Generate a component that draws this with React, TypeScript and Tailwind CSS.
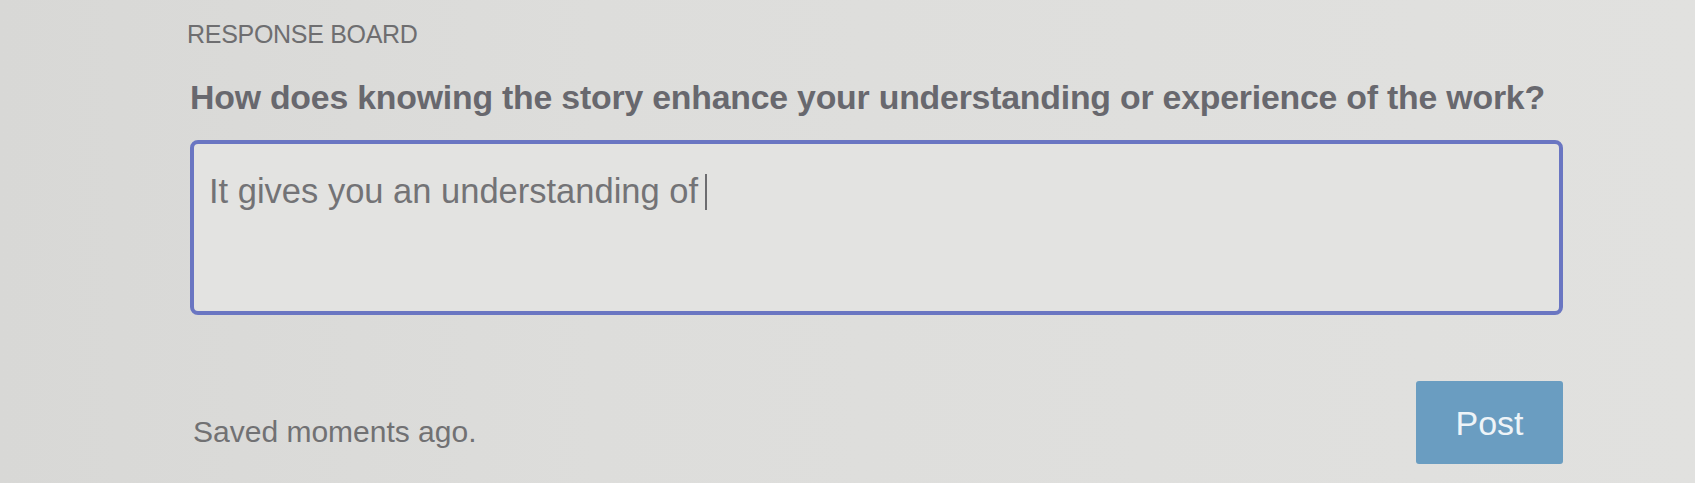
import React from "react";

export default function App() {
  return (
    <div
      className="w-[1695px] h-[483px] overflow-hidden bg-[linear-gradient(90deg,#d8d8d6_0%,#dddddb_35%,#e1e1df_100%)]"
      style={{ fontFamily: '"Liberation Sans", Arial, sans-serif' }}
    >
      <div className="pl-[187px] pt-[20px] w-[1563px]">
        <div className="text-[25px] leading-[28px] text-[#6e6e70] tracking-[-0.3px]">
          RESPONSE BOARD
        </div>
        <div className="mt-[29px] ml-[3px] text-[33.8px] leading-[40px] font-bold text-[#68686e] tracking-[-0.2px] whitespace-nowrap">
          How does knowing the story enhance your understanding or experience of the work?
        </div>
        <div className="mt-[23px] ml-[3px] h-[175px] rounded-[8px] border-[4px] border-[#6a76c2] bg-[#e3e3e1] pl-[15px] pt-[27px]">
          <div className="flex items-start text-[34.5px] leading-[40px] text-[#737376]">
            <span>It gives you an understanding of</span>
            <span className="ml-[7px] mt-[3px] inline-block h-[36px] w-[2px] bg-[#6d6d70]" />
          </div>
        </div>
        <div className="mt-[66px] flex items-start justify-between">
          <div className="ml-[6px] mt-[34px] text-[30px] leading-[34px] text-[#717173]">
            Saved moments ago.
          </div>
          <button className="h-[83px] w-[147px] rounded-[3px] bg-[#6a9dc1] text-[34px] leading-[40px] text-[#eef4f8]">
            Post
          </button>
        </div>
      </div>
    </div>
  );
}
